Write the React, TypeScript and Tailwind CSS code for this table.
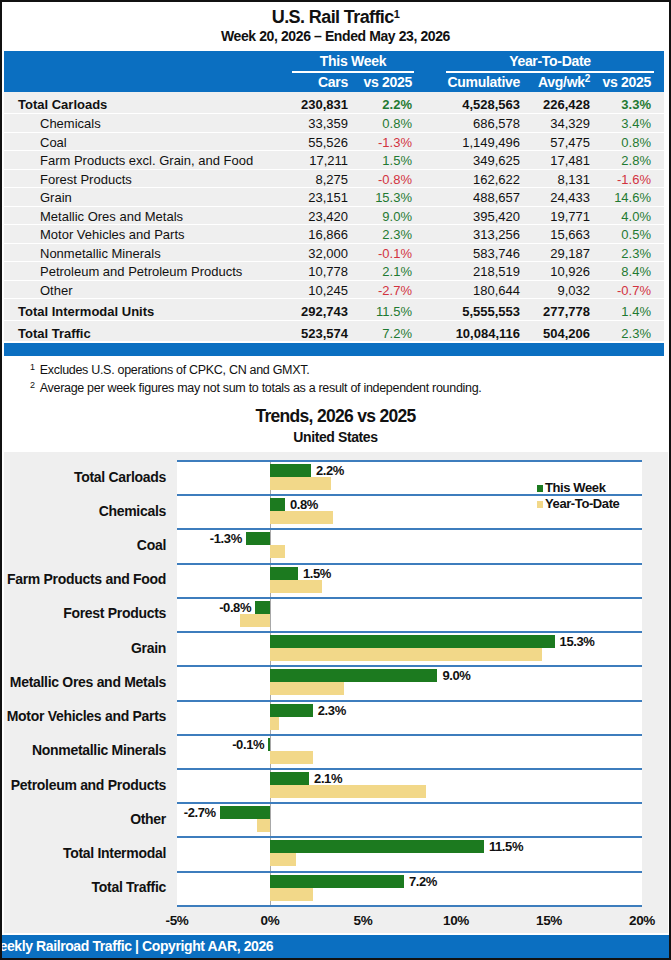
import React from "react";

const SANS = "font-['Liberation_Sans',Arial,sans-serif]";

interface TableRow {
  label: string;
  cars: string;
  wk: number;
  cum: string;
  avg: string;
  ytd: number;
  total?: boolean;
}

const tableRows: TableRow[] = [
  { label: "Total Carloads", cars: "230,831", wk: 2.2, cum: "4,528,563", avg: "226,428", ytd: 3.3, total: true },
  { label: "Chemicals", cars: "33,359", wk: 0.8, cum: "686,578", avg: "34,329", ytd: 3.4 },
  { label: "Coal", cars: "55,526", wk: -1.3, cum: "1,149,496", avg: "57,475", ytd: 0.8 },
  { label: "Farm Products excl. Grain, and Food", cars: "17,211", wk: 1.5, cum: "349,625", avg: "17,481", ytd: 2.8 },
  { label: "Forest Products", cars: "8,275", wk: -0.8, cum: "162,622", avg: "8,131", ytd: -1.6 },
  { label: "Grain", cars: "23,151", wk: 15.3, cum: "488,657", avg: "24,433", ytd: 14.6 },
  { label: "Metallic Ores and Metals", cars: "23,420", wk: 9.0, cum: "395,420", avg: "19,771", ytd: 4.0 },
  { label: "Motor Vehicles and Parts", cars: "16,866", wk: 2.3, cum: "313,256", avg: "15,663", ytd: 0.5 },
  { label: "Nonmetallic Minerals", cars: "32,000", wk: -0.1, cum: "583,746", avg: "29,187", ytd: 2.3 },
  { label: "Petroleum and Petroleum Products", cars: "10,778", wk: 2.1, cum: "218,519", avg: "10,926", ytd: 8.4 },
  { label: "Other", cars: "10,245", wk: -2.7, cum: "180,644", avg: "9,032", ytd: -0.7 },
  { label: "Total Intermodal Units", cars: "292,743", wk: 11.5, cum: "5,555,553", avg: "277,778", ytd: 1.4, total: true },
  { label: "Total Traffic", cars: "523,574", wk: 7.2, cum: "10,084,116", avg: "504,206", ytd: 2.3, total: true },
];

const chartRows: { label: string; wk: number; ytd: number }[] = [
  { label: "Total Carloads", wk: 2.2, ytd: 3.3 },
  { label: "Chemicals", wk: 0.8, ytd: 3.4 },
  { label: "Coal", wk: -1.3, ytd: 0.8 },
  { label: "Farm Products and Food", wk: 1.5, ytd: 2.8 },
  { label: "Forest Products", wk: -0.8, ytd: -1.6 },
  { label: "Grain", wk: 15.3, ytd: 14.6 },
  { label: "Metallic Ores and Metals", wk: 9.0, ytd: 4.0 },
  { label: "Motor Vehicles and Parts", wk: 2.3, ytd: 0.5 },
  { label: "Nonmetallic Minerals", wk: -0.1, ytd: 2.3 },
  { label: "Petroleum and Products", wk: 2.1, ytd: 8.4 },
  { label: "Other", wk: -2.7, ytd: -0.7 },
  { label: "Total Intermodal", wk: 11.5, ytd: 1.4 },
  { label: "Total Traffic", wk: 7.2, ytd: 2.3 },
];

// plot geometry: -5% .. 20% over 465px
const PX = 18.6;
const ZERO = 93;
const PLOT_W = 465;

function Pct({ v, bold }: { v: number; bold?: boolean }) {
  return (
    <div className={`text-right ${v < 0 ? "text-[#d2333f]" : "text-[#1f7a32]"} ${bold ? "font-bold" : "font-normal"}`}>
      {v.toFixed(1)}%
    </div>
  );
}

function Bar({ v, top, color }: { v: number; top: string; color: string }) {
  const w = Math.abs(v) * PX;
  const left = v < 0 ? ZERO - w : ZERO;
  return <div className={`absolute h-[13px] ${top} ${color}`} style={{ left, width: w }} />;
}

export default function App() {
  return (
    <div className={`w-[671px] h-[960px] overflow-hidden border-2 border-[#111] bg-white flex flex-col text-[#111] ${SANS}`}>
      {/* Title */}
      <div className="font-bold text-center text-[18px] tracking-[-0.6px] leading-[22px] mt-[4px]">
        U.S. Rail Traffic<sup className="text-[11px]">1</sup>
      </div>
      <div className="font-bold text-center text-[14px] tracking-[-0.4px] leading-[18px] -mt-[1px]">
        Week 20, 2026 – Ended May 23, 2026
      </div>

      {/* Table */}
      <div className="ml-[2px] w-[660px] mt-[6px]">
        <div className="bg-[#0b6fc1] h-[41px] text-white font-bold text-[14px] tracking-[-0.3px]">
          <div className="flex h-[22px]">
            <div className="w-[288px]" />
            <div className="w-[122px] text-center leading-[20px] border-b-2 border-white">This Week</div>
            <div className="w-[32px]" />
            <div className="w-[208px] text-center leading-[20px] border-b-2 border-white">Year-To-Date</div>
          </div>
          <div className="grid grid-cols-[286px_58px_64px_108px_70px_61px] h-[19px] leading-[19px]">
            <div />
            <div className="text-right">Cars</div>
            <div className="text-right">vs 2025</div>
            <div className="text-right">Cumulative</div>
            <div className="text-right">
              Avg/wk<sup className="text-[10px]">2</sup>
            </div>
            <div className="text-right">vs 2025</div>
          </div>
        </div>

        {tableRows.map((r, i) => (
          <div
            key={r.label}
            className={`grid grid-cols-[286px_58px_64px_108px_70px_61px] items-center bg-[#efefef] border-b border-white text-[13px] ${
              r.total ? "font-bold pt-[3px]" : "font-normal"
            } ${r.total ? (i === 12 ? "h-[21px]" : "h-[22px]") : "h-[18.5px]"}`}
          >
            <div className={r.total ? "pl-[14px]" : "pl-[36px]"}>{r.label}</div>
            <div className="text-right">{r.cars}</div>
            <Pct v={r.wk} bold={i === 0} />
            <div className="text-right">{r.cum}</div>
            <div className="text-right">{r.avg}</div>
            <Pct v={r.ytd} bold={i === 0} />
          </div>
        ))}
        <div className="h-[13px] mt-[1px] bg-[#0b6fc1]" />
      </div>

      {/* Footnotes */}
      <div className="text-[12.5px] tracking-[-0.3px] leading-[18px] pl-[28px] mt-[5px]">
        <div>
          <sup className="text-[9px] mr-[5px]">1</sup>Excludes U.S. operations of CPKC, CN and GMXT.
        </div>
        <div>
          <sup className="text-[9px] mr-[5px]">2</sup>Average per week figures may not sum to totals as a result of independent rounding.
        </div>
      </div>

      {/* Chart */}
      <div className="font-bold text-center text-[17.5px] tracking-[-0.7px] leading-[24px] mt-[7px]">Trends, 2026 vs 2025</div>
      <div className="font-bold text-center text-[14px] tracking-[-0.4px] leading-[18px]">United States</div>

      <div className="ml-[2px] w-[664px] h-[481px] mt-[6px] bg-[#efefef] pt-[8px] font-bold">
        <div className="flex">
          <div className="w-[173px] shrink-0 flex flex-col">
            {chartRows.map((r) => (
              <div
                key={r.label}
                className="h-[34.23px] flex items-center justify-end pr-[11px] text-[14px] tracking-[-0.3px] whitespace-nowrap"
              >
                {r.label}
              </div>
            ))}
          </div>
          <div className="relative w-[465px] shrink-0 bg-white border-b-2 border-[#3d7dbd]">
            <div className="absolute left-[93px] top-0 bottom-0 w-px bg-[#a8a8a8]" />
            {chartRows.map((r) => {
              const w = Math.abs(r.wk) * PX;
              const labelStyle =
                r.wk < 0 ? { right: PLOT_W - (ZERO - w) + 4 } : { left: ZERO + w + 5 };
              return (
                <div key={r.label} className="relative h-[34.23px] border-t-2 border-[#3d7dbd]">
                  <Bar v={r.wk} top="top-[2px]" color="bg-[#1c7a1f]" />
                  <Bar v={r.ytd} top="top-[15px]" color="bg-[#f2d889]" />
                  <div
                    className="absolute top-0 text-[13px] tracking-[-0.4px] leading-[17px] whitespace-nowrap"
                    style={labelStyle}
                  >
                    {r.wk.toFixed(1)}%
                  </div>
                </div>
              );
            })}
            <div className="absolute left-[360px] top-[20px] flex flex-col text-[13px] tracking-[-0.4px] leading-[16px]">
              <div className="flex items-center gap-[2px]">
                <span className="w-[6px] h-[7px] bg-[#1c7a1f]" />
                This Week
              </div>
              <div className="flex items-center gap-[2px]">
                <span className="w-[6px] h-[7px] bg-[#f2d889]" />
                Year-To-Date
              </div>
            </div>
          </div>
        </div>
        <div className="flex ml-[126.5px] h-[28px] items-center text-[13.5px] tracking-[-0.3px]">
          {["-5%", "0%", "5%", "10%", "15%", "20%"].map((t) => (
            <div key={t} className="w-[93px] shrink-0 text-center">
              {t}
            </div>
          ))}
        </div>
      </div>

      {/* Footer */}
      <div className="mt-[2px] h-[23px] bg-[#0b6fc1] text-white font-bold text-[14px] tracking-[-0.4px] leading-[23px] whitespace-nowrap overflow-hidden">
        <div className="-ml-[15px]">Weekly Railroad Traffic | Copyright AAR, 2026</div>
      </div>
    </div>
  );
}
